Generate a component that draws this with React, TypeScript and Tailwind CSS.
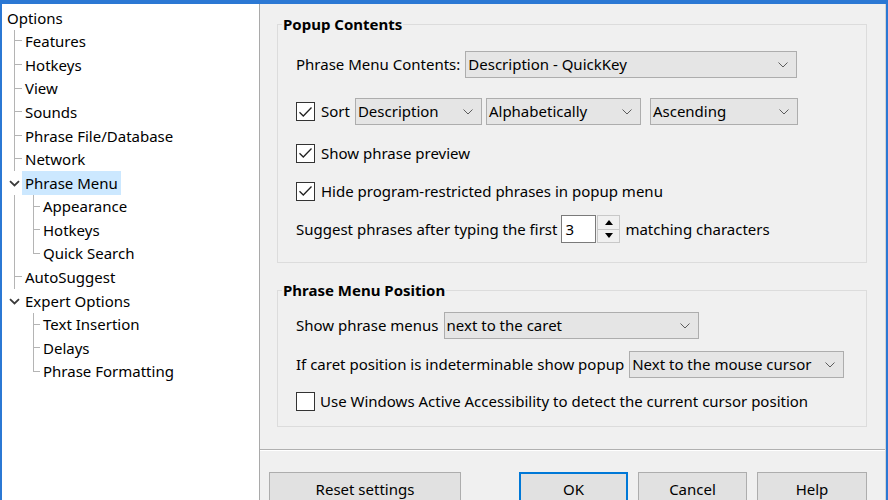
import React from "react";

type Node = {
  label: string;
  level: 0 | 1 | 2;
  open?: boolean;
  selected?: boolean;
  trunk?: boolean;
  last?: boolean;
};

const tree: Node[] = [
  { label: "Options", level: 0 },
  { label: "Features", level: 1 },
  { label: "Hotkeys", level: 1 },
  { label: "View", level: 1 },
  { label: "Sounds", level: 1 },
  { label: "Phrase File/Database", level: 1 },
  { label: "Network", level: 1 },
  { label: "Phrase Menu", level: 1, open: true, selected: true },
  { label: "Appearance", level: 2, trunk: true },
  { label: "Hotkeys", level: 2, trunk: true },
  { label: "Quick Search", level: 2, trunk: true, last: true },
  { label: "AutoSuggest", level: 1 },
  { label: "Expert Options", level: 1, open: true, last: true },
  { label: "Text Insertion", level: 2 },
  { label: "Delays", level: 2 },
  { label: "Phrase Formatting", level: 2, last: true },
];

function Branch({ last, inner }: { last?: boolean; inner?: boolean }) {
  const line = inner ? "ml-[11px] w-[7px]" : "ml-[12px] w-[8px]";
  return (
    <div className={`${inner ? "w-[18px]" : "w-[20px]"} h-full flex flex-col shrink-0`}>
      <div className={`${line} h-1/2 border-l border-b border-[#b4b4b4]`} />
      {!last && <div className={`${line} flex-1 border-l border-[#b4b4b4]`} />}
    </div>
  );
}

function Expander() {
  return (
    <div className="w-[20px] h-full flex items-center shrink-0">
      <svg width="11" height="7" viewBox="0 0 11 7" className="ml-[7px] mt-[1px]">
        <path d="M1 1.2 L5.5 5.5 L10 1.2" fill="none" stroke="#3a3a3a" strokeWidth="1.8" />
      </svg>
    </div>
  );
}

function TreeRow({ node }: { node: Node }) {
  return (
    <div className="h-[23.6px] flex items-stretch whitespace-nowrap">
      {node.level === 0 && <span className="pl-[5px] flex items-center">{node.label}</span>}
      {node.level === 1 && (node.open ? <Expander /> : <Branch last={node.last} />)}
      {node.level === 2 &&
        (node.trunk ? (
          <div className="w-[20px] h-full shrink-0">
            <div className="ml-[12px] h-full border-l border-[#b4b4b4]" />
          </div>
        ) : (
          <div className="w-[20px] shrink-0" />
        ))}
      {node.level === 2 && <Branch inner last={node.last} />}
      {node.level > 0 && (
        <span className={`px-[3px] flex items-center ${node.selected ? "bg-[#cce8ff]" : ""}`}>
          {node.label}
        </span>
      )}
    </div>
  );
}

function Chevron() {
  return (
    <svg width="10" height="6" viewBox="0 0 10 6" className="shrink-0">
      <path d="M0.5 0.5 L5 5 L9.5 0.5" fill="none" stroke="#5c5c5c" strokeWidth="1" />
    </svg>
  );
}

function Combo({ value, className }: { value: string; className: string }) {
  return (
    <div
      className={`${className} h-[27px] shrink-0 flex items-center justify-between border border-[#adadad] bg-[#e5e5e5] pl-[2px] pr-[8px]`}
    >
      <span className="whitespace-nowrap">{value}</span>
      <Chevron />
    </div>
  );
}

function Check({ checked }: { checked?: boolean }) {
  return (
    <div className="w-[19px] h-[19px] shrink-0 border border-[#333333] bg-white flex items-center justify-center">
      {checked && (
        <svg width="15" height="12" viewBox="0 0 15 12">
          <path d="M1.5 6.2 L5.3 10 L13.5 1.5" fill="none" stroke="#222222" strokeWidth="1.3" />
        </svg>
      )}
    </div>
  );
}

function CheckRow({ checked, label, className }: { checked?: boolean; label: string; className: string }) {
  return (
    <div className={`${className} h-[20px] flex items-center`}>
      <Check checked={checked} />
      <span className="ml-[6px] whitespace-nowrap">{label}</span>
    </div>
  );
}

function Spinner() {
  return (
    <div className="ml-[4px] h-[28px] flex shrink-0">
      <div className="w-[35px] border border-[#7a7a7a] bg-white pl-[3px] flex items-center">3</div>
      <div className="ml-[1px] w-[23px] flex flex-col">
        <div className="flex-1 border border-[#c8c8c8] bg-[#f0f0f0] flex items-center justify-center">
          <svg width="8" height="5" viewBox="0 0 8 5">
            <path d="M0 5 L4 0 L8 5 Z" fill="#000" />
          </svg>
        </div>
        <div className="flex-1 border border-t-0 border-[#c8c8c8] bg-[#f0f0f0] flex items-center justify-center">
          <svg width="8" height="5" viewBox="0 0 8 5">
            <path d="M0 0 L4 5 L8 0 Z" fill="#000" />
          </svg>
        </div>
      </div>
    </div>
  );
}

function Button({ label, primary, className }: { label: string; primary?: boolean; className: string }) {
  return (
    <div
      className={`${className} h-[34px] shrink-0 flex items-center justify-center bg-[#e1e1e1] ${
        primary ? "border-2 border-[#0078d7]" : "border border-[#adadad]"
      }`}
    >
      {label}
    </div>
  );
}

export default function App() {
  return (
    <div className="w-[888px] h-[500px] overflow-hidden bg-[#2b78d4] pt-[4px] px-[2px] flex font-['Noto_Sans',sans-serif] text-[15px] text-black">
      {/* Tree */}
      <div className="w-[258px] h-full shrink-0 bg-white border-r border-[#a9a9a9] pt-[2px]">
        {tree.map((node, i) => (
          <TreeRow key={i} node={node} />
        ))}
      </div>

      {/* Settings page */}
      <div className="flex-1 h-full bg-[#f0f0f0] border-r border-[#d4d4d4] flex flex-col pt-[10px]">
        <fieldset className="ml-[17px] mr-[18px] border border-[#dcdcdc]">
          <legend className="ml-[4px] px-[1px] font-bold leading-[20px]">Popup Contents</legend>
          <div className="pl-[18px] pb-[19px] flex flex-col">
            <div className="mt-[17px] h-[27px] flex items-center">
              <span className="whitespace-nowrap">Phrase Menu Contents:</span>
              <Combo value="Description - QuickKey" className="ml-[5px] w-[332px]" />
            </div>
            <div className="mt-[20px] h-[27px] flex items-center">
              <Check checked />
              <span className="ml-[6px]">Sort</span>
              <Combo value="Description" className="ml-[5px] w-[127px]" />
              <Combo value="Alphabetically" className="ml-[4px] w-[155px]" />
              <Combo value="Ascending" className="ml-[9px] w-[148px]" />
            </div>
            <CheckRow checked label="Show phrase preview" className="mt-[18px]" />
            <CheckRow checked label="Hide program-restricted phrases in popup menu" className="mt-[18px]" />
            <div className="mt-[14px] h-[28px] flex items-center whitespace-nowrap">
              <span>Suggest phrases after typing the first</span>
              <Spinner />
              <span className="ml-[5px]">matching characters</span>
            </div>
          </div>
        </fieldset>

        <fieldset className="mt-[17px] ml-[17px] mr-[18px] border border-[#dcdcdc]">
          <legend className="ml-[4px] px-[1px] font-bold leading-[20px]">Phrase Menu Position</legend>
          <div className="pl-[18px] pb-[15px] flex flex-col">
            <div className="mt-[12px] h-[27px] flex items-center">
              <span className="whitespace-nowrap">Show phrase menus</span>
              <Combo value="next to the caret" className="ml-[5px] w-[255px]" />
            </div>
            <div className="mt-[12px] h-[27px] flex items-center">
              <span className="whitespace-nowrap">If caret position is indeterminable show popup</span>
              <Combo value="Next to the mouse cursor" className="ml-[5px] w-[215px]" />
            </div>
            <div className="mt-[13px] h-[20px] flex items-center">
              <Check />
              <span className="ml-[5px] whitespace-nowrap">
                Use Windows Active Accessibility to detect the current cursor position
              </span>
            </div>
          </div>
        </fieldset>

        <div className="mt-[22px] h-[2px] shrink-0 border-t border-[#b0b0b0] bg-white" />

        <div className="mt-[21px] pl-[9px] pr-[18px] flex">
          <Button label="Reset settings" className="w-[192px]" />
          <Button label="OK" primary className="ml-auto w-[109px]" />
          <Button label="Cancel" className="ml-[10px] w-[109px]" />
          <Button label="Help" className="ml-[10px] w-[110px]" />
        </div>
      </div>
    </div>
  );
}
